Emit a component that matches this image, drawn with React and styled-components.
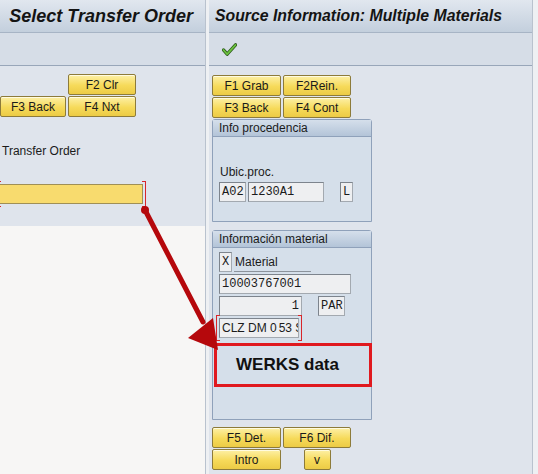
import React from "react";
import styled, { createGlobalStyle } from "styled-components";

const GlobalStyle = createGlobalStyle`
  html, body {
    margin: 0;
    padding: 0;
    background: #f4f5f7;
    overflow: hidden;
  }
  * { box-sizing: border-box; }
`;

const Page = styled.div`
  position: relative;
  width: 538px;
  height: 474px;
  display: flex;
  gap: 3px;
  background: #eef0f3;
  font-family: "Liberation Sans", Arial, sans-serif;
  color: #1b1b1b;
`;

const Pane = styled.div`
  width: ${(p) => p.$width}px;
  display: flex;
  flex-direction: column;
  border-right: 1px solid #b9c2ce;
  background: #f7f6f5;
`;

const TitleBar = styled.div`
  height: 33px;
  display: flex;
  align-items: center;
  justify-content: ${(p) => (p.$right ? "flex-end" : "flex-start")};
  padding: 0 ${(p) => (p.$right ? "12px" : "6px")};
  background: linear-gradient(#e1e7ef, #c3cfdd);
  border-bottom: 1px solid #a7b4c5;
  font-family: "Liberation Sans", Arial, sans-serif;
  font-weight: bold;
  font-style: italic;
  font-size: ${(p) => p.$size}px;
  color: #141414;
  white-space: nowrap;
  overflow: hidden;
`;

const Toolbar = styled.div`
  height: 33px;
  display: flex;
  align-items: center;
  padding-left: 13px;
  background: #d6dde7;
  border-bottom: 1px solid #98a6b9;
`;

const Content = styled.div`
  background: #dfe4ec;
  height: ${(p) => (p.$height ? `${p.$height}px` : "auto")};
  flex: ${(p) => (p.$fill ? 1 : "none")};
  padding: ${(p) => p.$pad};
  display: flex;
  flex-direction: column;
`;

const ButtonGrid = styled.div`
  display: grid;
  grid-template-columns: ${(p) => p.$cols};
  grid-auto-rows: 21px;
  gap: 1px 2px;
  margin-top: ${(p) => p.$top || 0}px;
`;

const Key = styled.button`
  grid-column: ${(p) => p.$col || "auto"};
  justify-self: ${(p) => (p.$narrow ? "center" : "stretch")};
  width: ${(p) => (p.$narrow ? "27px" : "auto")};
  height: 21px;
  padding: 0;
  border: 1px solid #8d7b3a;
  border-radius: 2px;
  background: linear-gradient(#fdf0a6, #f6da5a 55%, #eccb45);
  box-shadow: inset 0 1px 0 #fffbe0;
  font-family: "Liberation Sans", Arial, sans-serif;
  font-size: 12px;
  color: #1a1a1a;
  white-space: nowrap;
`;

const Label = styled.div`
  font-size: 12px;
  margin: ${(p) => p.$margin || "0"};
  white-space: nowrap;
`;

const YellowInput = styled.div`
  width: ${(p) => p.$width}px;
  height: 20px;
  background: #f8db6e;
  border: 1px solid #a08f55;
  border-left: none;
`;

const Focus = styled.div`
  position: relative;
  align-self: flex-start;
  margin-top: ${(p) => p.$top || 0}px;
  &::before, &::after {
    content: "";
    position: absolute;
    top: -3px;
    bottom: -3px;
    width: 3px;
    border: 1px solid #d8262a;
  }
  &::before { left: -3px; border-right: none; }
  &::after { right: -3px; border-left: none; }
`;

const Group = styled.section`
  width: 160px;
  height: ${(p) => p.$height}px;
  margin-top: ${(p) => p.$top || 0}px;
  border: 1px solid #8fa1ba;
  border-radius: 3px 3px 0 0;
  background: #d5dfea;
  display: flex;
  flex-direction: column;
`;

const GroupHeader = styled.div`
  height: 17px;
  padding-left: 6px;
  display: flex;
  align-items: center;
  background: linear-gradient(#d5dfeb, #b3c4d8);
  border-bottom: 1px solid #8fa1ba;
  font-size: 12px;
  white-space: nowrap;
`;

const GroupBody = styled.div`
  flex: 1;
  padding: ${(p) => p.$pad};
  display: flex;
  flex-direction: column;
  gap: ${(p) => p.$gap || 3}px;
`;

const Row = styled.div`
  display: flex;
  align-items: center;
  gap: ${(p) => p.$gap || 2}px;
`;

const Field = styled.div`
  width: ${(p) => p.$width}px;
  height: 20px;
  margin-left: ${(p) => p.$ml || 0}px;
  padding: 0 2px;
  display: flex;
  align-items: center;
  justify-content: ${(p) => (p.$right ? "flex-end" : "flex-start")};
  background: #eeeff1;
  border: 1px solid #8c939c;
  border-color: #7d848d #a3a9b0 #a3a9b0 #7d848d;
  font-family: ${(p) =>
    p.$sans
      ? `"Liberation Sans", Arial, sans-serif`
      : `"Liberation Mono", "DejaVu Sans Mono", monospace`};
  font-size: 12px;
  white-space: nowrap;
  overflow: hidden;
`;

const Caret = styled.span`
  display: inline-block;
  width: 1px;
  height: 15px;
  margin: 0 1px;
  background: #111;
`;

const UnderLabel = styled.div`
  width: 77px;
  height: 20px;
  display: flex;
  align-items: center;
  padding-left: 1px;
  border-bottom: 1px solid #8c939c;
  font-size: 12px;
`;

const Callout = styled.div`
  width: 158px;
  height: 44px;
  margin-left: -5px;
  margin-top: 3px;
  border: 3px solid #e0191f;
  display: flex;
  align-items: center;
  padding-left: 19px;
  font-family: "Liberation Sans", Arial, sans-serif;
  font-weight: bold;
  font-size: 17px;
  color: #111;
`;

const Arrow = styled.svg`
  position: absolute;
  left: 0;
  top: 0;
  pointer-events: none;
`;

const CheckIcon = () => (
  <svg width="15" height="13" viewBox="0 0 16 14">
    <path
      d="M1.5 7.5 L5.5 12 L14.5 2"
      fill="none"
      stroke="#2f5d1e"
      strokeWidth="3.6"
      strokeLinecap="round"
      strokeLinejoin="round"
    />
    <path
      d="M1.5 7.5 L5.5 12 L14.5 2"
      fill="none"
      stroke="#6cc23f"
      strokeWidth="1.8"
      strokeLinecap="round"
      strokeLinejoin="round"
    />
  </svg>
);

export default function App() {
  return (
    <>
      <GlobalStyle />
      <Page>
        <Pane $width={206}>
          <TitleBar $right $size={18}>Select Transfer Order</TitleBar>
          <Toolbar />
          <Content $height={160} $pad="8px 0 0 0">
            <ButtonGrid $cols="66px 68px">
              <Key $col="2">F2 Clr</Key>
              <Key>F3 Back</Key>
              <Key>F4 Nxt</Key>
            </ButtonGrid>
            <Label $margin="27px 0 0 2px">Transfer Order</Label>
            <Focus $top={26}>
              <YellowInput $width={143} />
            </Focus>
          </Content>
        </Pane>

        <Pane $width={324}>
          <TitleBar $size={15.8}>Source Information: Multiple Materials</TitleBar>
          <Toolbar>
            <CheckIcon />
          </Toolbar>
          <Content $fill $pad="9px 0 0 3px">
            <ButtonGrid $cols="69px 68px">
              <Key>F1 Grab</Key>
              <Key>F2Rein.</Key>
              <Key>F3 Back</Key>
              <Key>F4 Cont</Key>
            </ButtonGrid>

            <Group $height={103} $top={1}>
              <GroupHeader>Info procedencia</GroupHeader>
              <GroupBody $pad="28px 0 0 6px">
                <Label $margin="0 0 0 1px">Ubic.proc.</Label>
                <Row>
                  <Field $width={27}>A02</Field>
                  <Field $width={76}>1230A1</Field>
                  <Field $width={13} $ml={14}>L</Field>
                </Row>
              </GroupBody>
            </Group>

            <Group $height={190} $top={8}>
              <GroupHeader>Información material</GroupHeader>
              <GroupBody $pad="4px 0 0 6px" $gap={2}>
                <Row $gap={2}>
                  <Field $width={13}>X</Field>
                  <UnderLabel>Material</UnderLabel>
                </Row>
                <Field $width={132}>10003767001</Field>
                <Row $gap={16}>
                  <Field $width={83} $right>1</Field>
                  <Field $width={27}>PAR</Field>
                </Row>
                <Focus>
                  <Field $width={80} $sans>
                    CLZ DM 0<Caret />53 S
                  </Field>
                </Focus>
                <Callout>WERKS data</Callout>
              </GroupBody>
            </Group>

            <ButtonGrid $cols="69px 68px" $top={7}>
              <Key>F5 Det.</Key>
              <Key>F6 Dif.</Key>
              <Key>Intro</Key>
              <Key $narrow>v</Key>
            </ButtonGrid>
          </Content>
        </Pane>

        <Arrow width="538" height="474" viewBox="0 0 538 474">
          <circle cx="145" cy="210" r="4" fill="#b5080c" />
          <line
            x1="145"
            y1="210"
            x2="203"
            y2="322"
            stroke="#b5080c"
            strokeWidth="5"
            strokeLinecap="round"
          />
          <polygon points="188,338 213,318 218,350" fill="#b5080c" />
        </Arrow>
      </Page>
    </>
  );
}
